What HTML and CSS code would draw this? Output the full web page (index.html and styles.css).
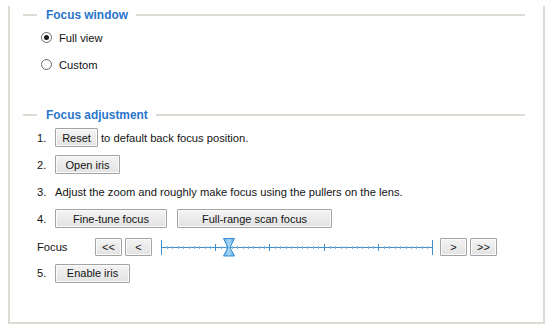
FILE: index.html
```html
<!DOCTYPE html>
<html>
<head>
<meta charset="utf-8">
<link rel="stylesheet" href="styles.css">
</head>
<body>
<div class="panel">
  <div class="section-title first"><span class="rule-lead"></span><span class="title-text">Focus window</span><span class="rule-fill"></span></div>
  <div class="row radio-row"><span class="radio checked"></span><span>Full view</span></div>
  <div class="row radio-row"><span class="radio"></span><span>Custom</span></div>

  <div class="section-title second"><span class="rule-lead"></span><span class="title-text">Focus adjustment</span><span class="rule-fill"></span></div>
  <div class="row step"><span class="num">1.</span><button class="btn w-reset">Reset</button><span class="after">to default back focus position.</span></div>
  <div class="row step"><span class="num">2.</span><button class="btn w-open">Open iris</button></div>
  <div class="row step"><span class="num">3.</span><span>Adjust the zoom and roughly make focus using the pullers on the lens.</span></div>
  <div class="row step"><span class="num">4.</span><button class="btn w-fine">Fine-tune focus</button><button class="btn w-full">Full-range scan focus</button></div>
  <div class="row focus-row">
    <span class="focus-label">Focus</span>
    <button class="btn w-arrow">&lt;&lt;</button>
    <button class="btn w-arrow">&lt;</button>
    <svg class="slider" width="274" height="20" viewBox="0 0 274 20">
      <g stroke="#3f8fce" stroke-width="1">
        <line x1="1" y1="10.5" x2="273" y2="10.5"/>
        <line x1="1.5" y1="3" x2="1.5" y2="18"/>
        <line x1="272.5" y1="3" x2="272.5" y2="18"/>
        <line x1="55.5" y1="7" x2="55.5" y2="14"/>
        <line x1="109.5" y1="7" x2="109.5" y2="14"/>
        <line x1="164.5" y1="7" x2="164.5" y2="14"/>
        <line x1="218.5" y1="7" x2="218.5" y2="14"/>
      </g>
      <g stroke="#7fb4de" stroke-width="1">
        <path d="M7.5 9v3M12.5 9v3M18.5 9v3M23.5 9v3M29.5 9v3M34.5 9v3M39.5 9v3M45.5 9v3M50.5 9v3
                 M61.5 9v3M66.5 9v3M72.5 9v3M77.5 9v3M83.5 9v3M88.5 9v3M93.5 9v3M99.5 9v3M104.5 9v3
                 M115.5 9v3M120.5 9v3M126.5 9v3M131.5 9v3M137.5 9v3M142.5 9v3M147.5 9v3M153.5 9v3M158.5 9v3
                 M170.5 9v3M175.5 9v3M181.5 9v3M186.5 9v3M192.5 9v3M197.5 9v3M202.5 9v3M208.5 9v3M213.5 9v3
                 M224.5 9v3M229.5 9v3M235.5 9v3M240.5 9v3M246.5 9v3M251.5 9v3M256.5 9v3M262.5 9v3M267.5 9v3"/>
      </g>
      <defs>
        <linearGradient id="tg" x1="0" y1="0" x2="1" y2="0">
          <stop offset="0" stop-color="#5aaee6"/>
          <stop offset="0.5" stop-color="#a9d6f3"/>
          <stop offset="1" stop-color="#4fa3dd"/>
        </linearGradient>
      </defs>
      <path d="M63.5 1.5h11l-4.5 9 4.5 8.5h-11l4.5-8.5z" fill="url(#tg)" stroke="#3a8dd0" stroke-width="1"/>
    </svg>
    <button class="btn w-arrow gap-right">&gt;</button>
    <button class="btn w-arrow">&gt;&gt;</button>
  </div>
  <div class="row step last"><span class="num">5.</span><button class="btn w-enable">Enable iris</button></div>
</div>
</body>
</html>
```

FILE: styles.css
```css
html, body {
  margin: 0;
  padding: 0;
  background: #ffffff;
}
body {
  padding: 0 8px 0 8px;
  font-family: "Liberation Sans", Arial, sans-serif;
  font-size: 11.2px;
  color: #141414;
}
.panel {
  border: 2px solid #dddbd3;
  border-top: none;
  padding: 0 18px 36px 13px;
  height: 318px;
  box-sizing: border-box;
}
.section-title {
  display: flex;
  align-items: center;
  height: 18px;
}
.section-title.first { margin-top: 6px; }
.section-title.second { margin-top: 28px; }
.rule-lead {
  width: 14px;
  height: 2px;
  background: #dddbd3;
}
.rule-fill {
  flex: 1;
  height: 2px;
  background: #dddbd3;
}
.title-text {
  font-weight: bold;
  font-size: 11.9px;
  color: #2a76cc;
  padding: 0 8px 0 9px;
}
.row {
  display: flex;
  align-items: center;
  height: 27px;
}
.radio-row {
  padding-left: 18px;
}
.radio {
  width: 11px;
  height: 11px;
  box-sizing: border-box;
  border: 1px solid #6b6b6b;
  border-radius: 50%;
  margin-right: 7px;
  display: flex;
  align-items: center;
  justify-content: center;
  background: #fff;
}
.radio.checked::after {
  content: "";
  width: 5px;
  height: 5px;
  border-radius: 50%;
  background: #1c1c1c;
}
.step {
  padding-left: 14px;
}
.num {
  width: 18px;
}
.btn {
  font-family: "Liberation Sans", Arial, sans-serif;
  font-size: 11px;
  color: #141414;
  height: 19px;
  padding: 0;
  border: 1px solid #a3a3a3;
  border-radius: 1px;
  background: linear-gradient(#f4f4f4, #e2e2e2);
  box-shadow: inset 0 0 0 1px #fbfbfb;
  box-sizing: border-box;
  line-height: 16px;
}
.w-reset { width: 43px; }
.w-open { width: 65px; }
.w-fine { width: 112px; }
.w-full { width: 155px; margin-left: 10px; }
.w-enable { width: 75px; }
.w-arrow { width: 27px; height: 18px; margin-right: 3px; }
.after { margin-left: 3px; }
.focus-row {
  padding-left: 14px;
  height: 30px;
}
.focus-label {
  width: 58px;
}
.slider {
  display: block;
  margin-left: 5px;
  margin-right: 6px;
}
.step.last {
  height: 22px;
}
```
